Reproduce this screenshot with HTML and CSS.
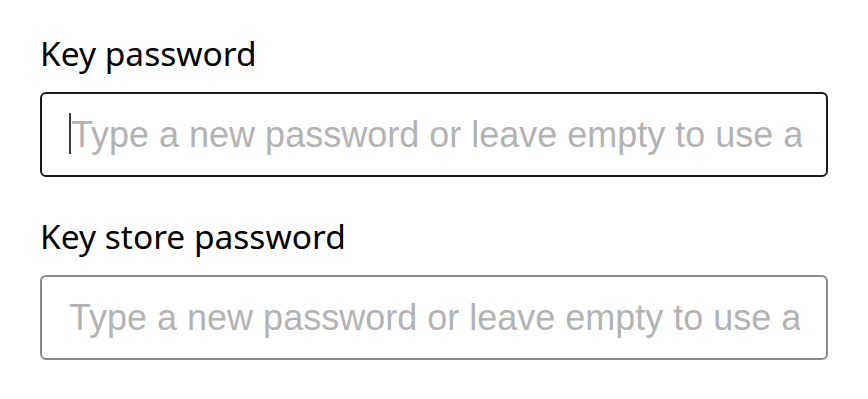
FILE: index.html
```html
<!DOCTYPE html>
<html>
<head>
<meta charset="utf-8">
<link rel="stylesheet" href="styles.css">
</head>
<body>
<div class="form">
  <div class="field">
    <label class="label" for="kp">Key password</label>
    <div class="input-wrap">
      <input class="input focused" id="kp" type="text" placeholder="Type a new password or leave empty to use a default one">
      <span class="caret"></span>
    </div>
  </div>
  <div class="field">
    <label class="label" for="ksp">Key store password</label>
    <div class="input-wrap">
      <input class="input" id="ksp" type="text" placeholder="Type a new password or leave empty to use a default one">
    </div>
  </div>
</div>
</body>
</html>
```

FILE: styles.css
```css
html, body {
  margin: 0;
  padding: 0;
  background: #ffffff;
}
.form {
  padding: 33px 40px 0 40px;
  display: flex;
  flex-direction: column;
  gap: 39px;
  width: 788px;
}
.field {
  display: flex;
  flex-direction: column;
  gap: 19px;
}
.label {
  font-family: "Noto Sans", "Open Sans", sans-serif;
  font-size: 33.5px;
  line-height: 40px;
  height: 40px;
  color: #000000;
}
.input-wrap {
  position: relative;
  width: 788px;
  height: 85px;
}
.input {
  box-sizing: border-box;
  width: 788px;
  height: 85px;
  margin: 0;
  padding: 0 26px 0 27px;
  border: 2px solid #8a8a8a;
  border-radius: 6px;
  font-family: "Liberation Sans", Arial, sans-serif;
  font-size: 36px;
  color: #000;
  outline: none;
  background: #fff;
  caret-color: transparent;
}
.input::placeholder {
  color: #b3b3b3;
}
.input.focused {
  border-color: #1a1a1a;
  padding-left: 29px;
  padding-right: 24px;
}
.caret {
  position: absolute;
  left: 29px;
  top: 21px;
  width: 2px;
  height: 41px;
  background: #3a3a3a;
}
```
